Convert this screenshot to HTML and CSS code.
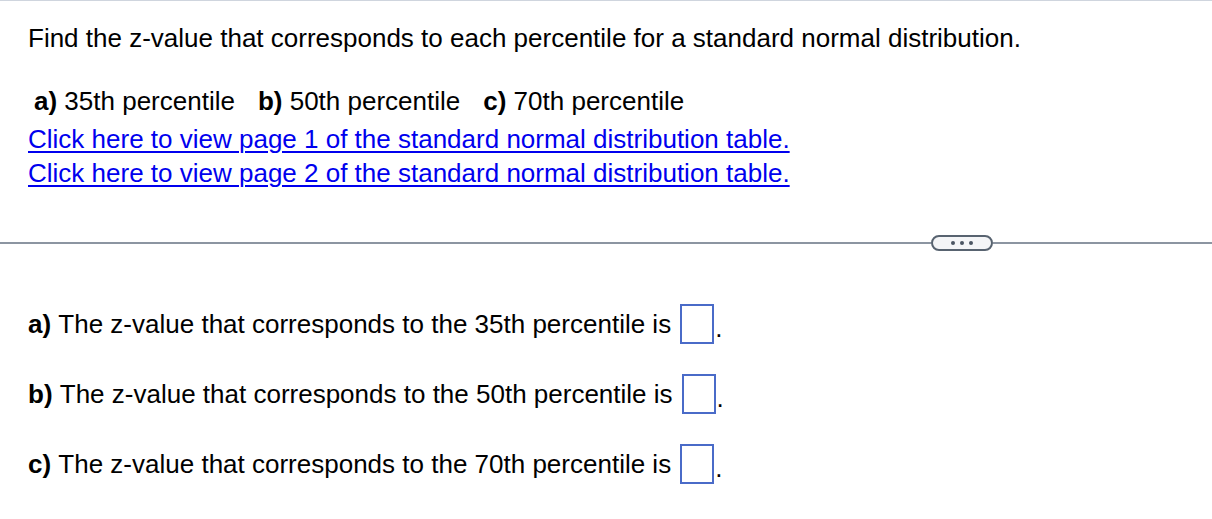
FILE: index.html
```html
<!DOCTYPE html>
<html>
<head>
<meta charset="utf-8">
<link rel="stylesheet" href="styles.css">
</head>
<body>
<div class="page">
  <section class="question">
    <p class="intro">Find the z-value that corresponds to each percentile for a standard normal distribution.</p>
    <p class="parts"><b>a)</b> 35th percentile<span class="sp"></span><b>b)</b> 50th percentile<span class="sp"></span><b>c)</b> 70th percentile</p>
    <div class="links">
      <a href="#">Click here to view page 1 of the standard normal distribution table.</a>
      <a href="#">Click here to view page 2 of the standard normal distribution table.</a>
    </div>
  </section>
  <div class="divider">
    <div class="line"></div>
    <div class="pill"><span></span><span></span><span></span></div>
    <div class="line end"></div>
  </div>
  <section class="answers">
    <div class="row"><b>a)</b>&nbsp;The z-value that corresponds to the 35th percentile is<span class="box"></span><span class="dot">.</span></div>
    <div class="row"><b>b)</b>&nbsp;The z-value that corresponds to the 50th percentile is<span class="box"></span><span class="dot">.</span></div>
    <div class="row"><b>c)</b>&nbsp;The z-value that corresponds to the 70th percentile is<span class="box"></span><span class="dot">.</span></div>
  </section>
</div>
</body>
</html>
```
FILE: styles.css
```css
html, body {
  margin: 0;
  padding: 0;
  background: #fff;
}
body {
  font-family: "Liberation Sans", Arial, sans-serif;
  font-size: 26px;
  color: #000;
}
.page {
  border-top: 1px solid #cfd5de;
}
.question {
  padding: 0 0 0 28px;
}
.intro {
  margin: 0;
  padding-top: 23px;
  line-height: 28px;
}
.parts {
  margin: 0;
  padding: 35px 0 0 6px;
  line-height: 28px;
}
.sp {
  display: inline-block;
  width: 23px;
}
.links {
  display: flex;
  flex-direction: column;
  align-items: flex-start;
  margin-top: 7px;
}
.links a {
  color: #0000ee;
  line-height: 34px;
  text-decoration: underline;
  text-decoration-thickness: 2px;
  text-underline-offset: 3px;
}
.divider {
  display: flex;
  align-items: center;
  margin-top: 45px;
}
.line {
  width: 931px;
  height: 2px;
  background: #8c95a1;
}
.line.end {
  flex: 1;
}
.pill {
  width: 58px;
  height: 12px;
  border: 2px solid #586370;
  border-radius: 8px;
  background: #f4f5f7;
  display: flex;
  justify-content: center;
  align-items: center;
  gap: 5px;
}
.pill span {
  width: 4px;
  height: 4px;
  border-radius: 50%;
  background: #4b5563;
}
.answers {
  padding: 53px 0 0 28px;
  display: flex;
  flex-direction: column;
  gap: 30px;
}
.row {
  display: flex;
  align-items: center;
  height: 40px;
  white-space: pre;
}
.box {
  display: inline-block;
  width: 30px;
  height: 36px;
  border: 2px solid #4a6bc8;
  margin-left: 9px;
}
.dot {
  margin-left: 1px;
  position: relative;
  top: 4px;
}
```
